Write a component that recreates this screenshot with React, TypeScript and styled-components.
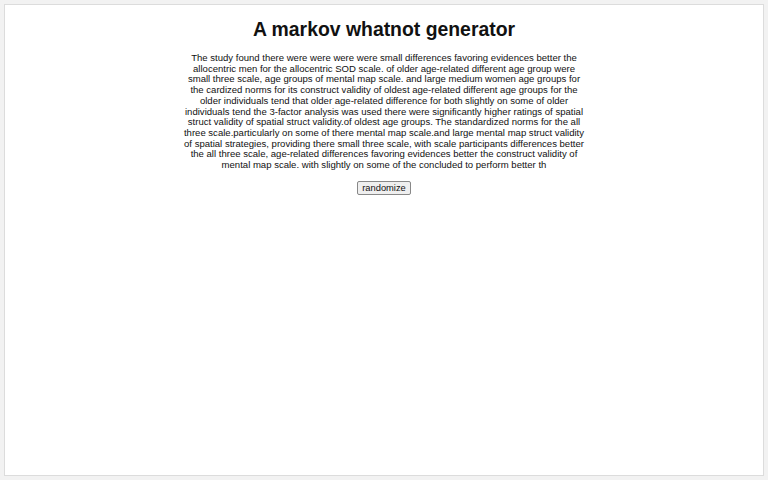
import React, { useState } from "react";
import styled, { createGlobalStyle } from "styled-components";

const Global = createGlobalStyle`
  html, body { margin: 0; padding: 0; }
  body {
    background: #f2f2f2;
    font-family: "Liberation Sans", Arial, sans-serif;
    color: #111;
  }
`;

const Page = styled.div`
  padding: 4px;
  box-sizing: border-box;
  height: 480px;
`;

const Panel = styled.main`
  background: #fff;
  border: 1px solid #dcdcdc;
  box-sizing: border-box;
  height: 472px;
  display: flex;
  flex-direction: column;
  align-items: center;
  padding-top: 12px;
`;

const Title = styled.h1`
  font-size: 19.4px;
  font-weight: bold;
  margin: 0 0 12px 0;
  line-height: 24px;
`;

const Text = styled.p`
  width: 402px;
  margin: 0 0 10px 0;
  font-size: 9.55px;
  text-align: center;
  line-height: 10.7px;
`;

const Button = styled.button`
  font-family: "Liberation Sans", Arial, sans-serif;
  font-size: 9.33px;
  padding: 1px 4px;
  color: #111;
  background: #efefef;
  border: 1px solid #888;
  border-radius: 2px;
`;

const TEXT =
  "The study found there were were were were small differences favoring evidences better the allocentric men for the allocentric SOD scale. of older age-related different age group were small three scale, age groups of mental map scale. and large medium women age groups for the cardized norms for its construct validity of oldest age-related different age groups for the older individuals tend that older age-related difference for both slightly on some of older individuals tend the 3-factor analysis was used there were significantly higher ratings of spatial struct validity of spatial struct validity.of oldest age groups. The standardized norms for the all three scale.particularly on some of there mental map scale.and large mental map struct validity of spatial strategies, providing there small three scale, with scale participants differences better the all three scale, age-related differences favoring evidences better the construct validity of mental map scale. with slightly on some of the concluded to perform better th";

export default function App() {
  const [text] = useState(TEXT);
  return (
    <>
      <Global />
      <Page>
        <Panel>
          <Title>A markov whatnot generator</Title>
          <Text>{text}</Text>
          <Button>randomize</Button>
        </Panel>
      </Page>
    </>
  );
}
